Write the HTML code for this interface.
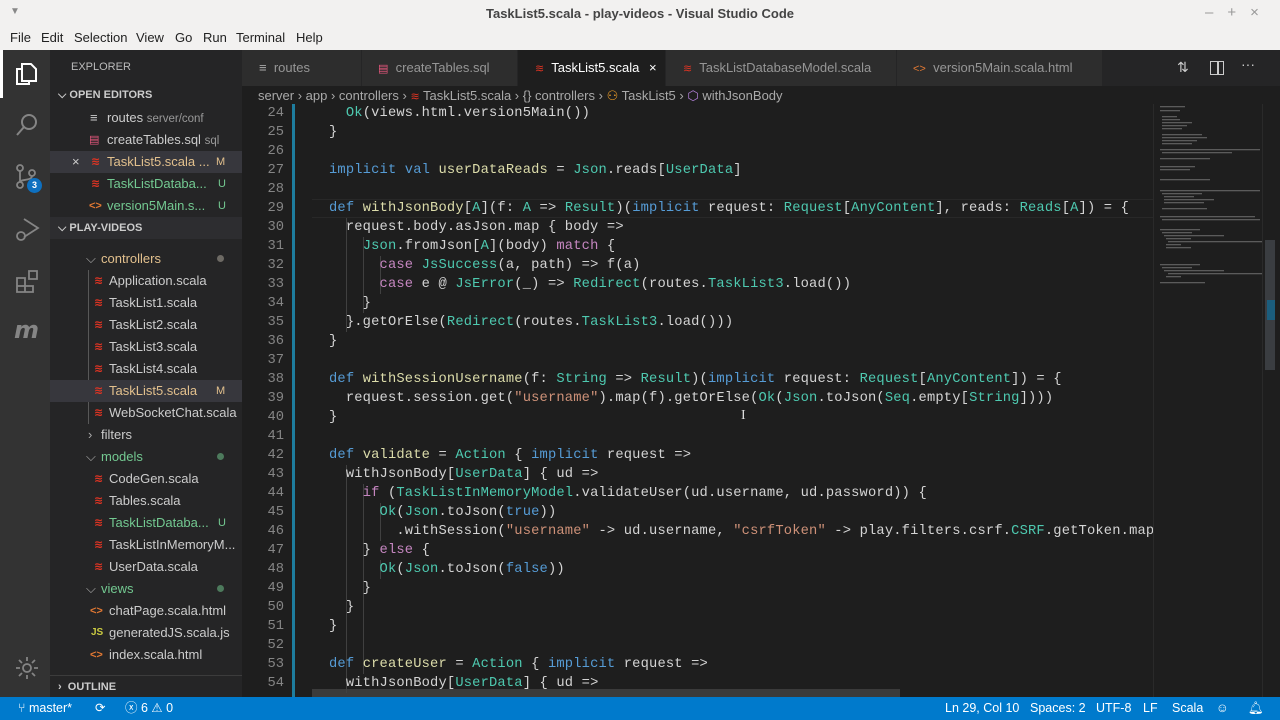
<!DOCTYPE html>
<html><head><meta charset="utf-8"><style>
*{margin:0;padding:0;box-sizing:border-box}
body{width:1280px;height:720px;overflow:hidden;background:#1e1e1e;font-family:"Liberation Sans","DejaVu Sans",sans-serif;position:relative}
.abs{position:absolute}
#title{left:0;top:0;width:1280px;height:28px;background:#f2f1f0;color:#444;font-size:13px;font-weight:bold;text-align:center;line-height:28px}
#menu{left:0;top:28px;width:1280px;height:22px;background:#f2f1f0;font-size:13px;color:#222}
#menu span{position:absolute;top:2px}
#act{left:0;top:50px;width:50px;height:647px;background:#333333}
#side{left:50px;top:50px;width:192px;height:647px;background:#252526;color:#ccc;font-size:13px}
.row{position:absolute;left:0;width:192px;height:22px;line-height:22px;white-space:nowrap}
.hdr{font-weight:bold;font-size:11px;color:#ccc;padding-left:8px}
.ic{position:absolute;font-size:11px;font-weight:bold}
#tabs{left:242px;top:50px;width:1038px;height:36px;background:#252526}
.tab{position:absolute;top:0;height:36px;line-height:36px;background:#2d2d2d;color:#969696;font-size:13px;white-space:nowrap;border-right:1px solid #252526}
#crumb{left:242px;top:86px;width:1038px;height:20px;background:#1e1e1e;color:#a9a9a9;font-size:13px;line-height:20px;white-space:nowrap}
.ln{position:absolute;width:42px;left:242px;text-align:right;color:#858585;font-family:"Liberation Mono",monospace;font-size:13.75px;line-height:19px}
#code{left:312px;top:104px;width:841px;height:593px;overflow:hidden}
.cl{position:absolute;left:17px;white-space:pre;font-family:"Liberation Mono",monospace;font-size:13.75px;letter-spacing:0.17px;line-height:19px;color:#d4d4d4}
.k{color:#569cd6}.f{color:#dcdcaa}.t{color:#4ec9b0}.s{color:#ce9178}.c{color:#c586c0}
#status{left:0;top:697px;width:1280px;height:23px;background:#007acc;color:#fff;font-size:12.5px;line-height:23px}
#status span{position:absolute;top:0}
</style></head><body>
<div id="title" class="abs">TaskList5.scala - play-videos - Visual Studio Code</div>
<div class="abs" style="left:10px;top:6px;color:#888;font-size:10px">▼</div>
<div class="abs" style="left:1205px;top:4px;color:#999;font-size:15px;letter-spacing:14px">–+×</div>
<div id="menu" class="abs"><span style="left:10px">File</span><span style="left:41px">Edit</span><span style="left:74px">Selection</span><span style="left:136px">View</span><span style="left:175px">Go</span><span style="left:203px">Run</span><span style="left:236px">Terminal</span><span style="left:296px">Help</span></div>

<div id="act" class="abs">
<div class="abs" style="left:0;top:0;width:3px;height:48px;background:#fff"></div>
<svg class="abs" style="left:12px;top:10px" width="28" height="28" viewBox="0 0 28 28" fill="none" stroke="#fff" stroke-width="2"><path d="M10 4h9l5 5v12H10z"/><path d="M10 9H5v15h12v-3"/></svg>
<svg class="abs" style="left:14px;top:62px" width="26" height="26" viewBox="0 0 26 26" fill="none" stroke="#858585" stroke-width="2"><circle cx="15" cy="10" r="7"/><path d="M10 15L3 23"/></svg>
<svg class="abs" style="left:14px;top:113px" width="26" height="28" viewBox="0 0 26 28" fill="none" stroke="#858585" stroke-width="1.8"><circle cx="6" cy="5" r="3"/><circle cx="6" cy="22" r="3"/><circle cx="18" cy="10" r="3"/><path d="M6 8v11M18 13c0 5-12 3-12 6"/></svg>
<div class="abs" style="left:27px;top:128px;width:15px;height:15px;border-radius:50%;background:#0e70c0;color:#fff;font-size:9px;font-weight:bold;text-align:center;line-height:15px">3</div>
<svg class="abs" style="left:14px;top:165px" width="26" height="28" viewBox="0 0 26 28" fill="none" stroke="#858585" stroke-width="1.8"><path d="M10 4l14 9-14 9"/><circle cx="7" cy="21" r="4"/></svg>
<svg class="abs" style="left:14px;top:218px" width="26" height="26" viewBox="0 0 26 26" fill="none" stroke="#858585" stroke-width="1.8"><path d="M3 10h8v8H3zM11 18h8v6h-8zM3 18h8v6H3zM15 3h8v8h-8z"/></svg>
<div class="abs" style="left:14px;top:266px;color:#858585;font-size:24px;font-weight:bold;font-style:italic;font-family:'DejaVu Sans'">m</div>
<svg class="abs" style="left:14px;top:605px" width="26" height="26" viewBox="0 0 26 26" fill="none" stroke="#858585" stroke-width="1.8"><circle cx="13" cy="13" r="4"/><path d="M13 2v4M13 20v4M2 13h4M20 13h4M5 5l3 3M18 18l3 3M5 21l3-3M18 8l3-3"/></svg>
</div>

<div id="side" class="abs">
<div class="row" style="top:6px;left:21px;font-size:11px;color:#bbb">EXPLORER</div>
<div class="row hdr" style="top:34px">⌵ OPEN EDITORS</div>
<div class="row" style="top:57px"><span class="abs" style="left:40px;color:#ccc">≡</span><span class="abs" style="left:57px">routes <span style="color:#999;font-size:11.5px">server/conf</span></span></div>
<div class="row" style="top:79px"><span class="ic" style="left:39px;color:#e8577d">▤</span><span class="abs" style="left:57px">createTables.sql <span style="color:#999;font-size:11.5px">sql</span></span></div>
<div class="row" style="top:101px;background:#37373d"><span class="abs" style="left:22px;color:#ccc">×</span><span class="ic" style="left:41px;color:#de3423">≋</span><span class="abs" style="left:57px;color:#e2c08d">TaskList5.scala ...</span><span class="abs" style="left:166px;color:#e2c08d;font-size:11px">M</span></div>
<div class="row" style="top:123px"><span class="ic" style="left:41px;color:#de3423">≋</span><span class="abs" style="left:57px;color:#73c991">TaskListDataba...</span><span class="abs" style="left:168px;color:#73c991;font-size:11px">U</span></div>
<div class="row" style="top:145px"><span class="ic" style="left:39px;color:#e37933">&lt;&gt;</span><span class="abs" style="left:57px;color:#73c991">version5Main.s...</span><span class="abs" style="left:168px;color:#73c991;font-size:11px">U</span></div>
<div class="row hdr" style="top:167px;background:#2d2d30">⌵ PLAY-VIDEOS</div>
<div class="row" style="top:198px"><span class="abs" style="left:36px;color:#aaa">⌵</span><span class="abs" style="left:51px;color:#e2c08d">controllers</span><span class="abs" style="left:167px;top:7px;width:7px;height:7px;border-radius:50%;background:#6d6a64"></span></div>
<div class="abs" style="left:38px;top:220px;width:1px;height:154px;background:#585858"></div>
<div class="row" style="top:220px"><span class="ic" style="left:44px;color:#de3423">≋</span><span class="abs" style="left:59px">Application.scala</span></div>
<div class="row" style="top:242px"><span class="ic" style="left:44px;color:#de3423">≋</span><span class="abs" style="left:59px">TaskList1.scala</span></div>
<div class="row" style="top:264px"><span class="ic" style="left:44px;color:#de3423">≋</span><span class="abs" style="left:59px">TaskList2.scala</span></div>
<div class="row" style="top:286px"><span class="ic" style="left:44px;color:#de3423">≋</span><span class="abs" style="left:59px">TaskList3.scala</span></div>
<div class="row" style="top:308px"><span class="ic" style="left:44px;color:#de3423">≋</span><span class="abs" style="left:59px">TaskList4.scala</span></div>
<div class="row" style="top:330px;background:#37373d"><span class="ic" style="left:44px;color:#de3423">≋</span><span class="abs" style="left:59px;color:#e2c08d">TaskList5.scala</span><span class="abs" style="left:166px;color:#e2c08d;font-size:11px">M</span></div>
<div class="row" style="top:352px"><span class="ic" style="left:44px;color:#de3423">≋</span><span class="abs" style="left:59px">WebSocketChat.scala</span></div>
<div class="row" style="top:374px"><span class="abs" style="left:38px;color:#aaa">›</span><span class="abs" style="left:51px">filters</span></div>
<div class="row" style="top:396px"><span class="abs" style="left:36px;color:#aaa">⌵</span><span class="abs" style="left:51px;color:#73c991">models</span><span class="abs" style="left:167px;top:7px;width:7px;height:7px;border-radius:50%;background:#4d7a5c"></span></div>
<div class="row" style="top:418px"><span class="ic" style="left:44px;color:#de3423">≋</span><span class="abs" style="left:59px">CodeGen.scala</span></div>
<div class="row" style="top:440px"><span class="ic" style="left:44px;color:#de3423">≋</span><span class="abs" style="left:59px">Tables.scala</span></div>
<div class="row" style="top:462px"><span class="ic" style="left:44px;color:#de3423">≋</span><span class="abs" style="left:59px;color:#73c991">TaskListDataba...</span><span class="abs" style="left:168px;color:#73c991;font-size:11px">U</span></div>
<div class="row" style="top:484px"><span class="ic" style="left:44px;color:#de3423">≋</span><span class="abs" style="left:59px">TaskListInMemoryM...</span></div>
<div class="row" style="top:506px"><span class="ic" style="left:44px;color:#de3423">≋</span><span class="abs" style="left:59px">UserData.scala</span></div>
<div class="row" style="top:528px"><span class="abs" style="left:36px;color:#aaa">⌵</span><span class="abs" style="left:51px;color:#73c991">views</span><span class="abs" style="left:167px;top:7px;width:7px;height:7px;border-radius:50%;background:#4d7a5c"></span></div>
<div class="row" style="top:550px"><span class="ic" style="left:40px;color:#e37933">&lt;&gt;</span><span class="abs" style="left:59px">chatPage.scala.html</span></div>
<div class="row" style="top:572px"><span class="ic" style="left:41px;color:#cbcb41;font-size:10px">JS</span><span class="abs" style="left:59px">generatedJS.scala.js</span></div>
<div class="row" style="top:594px"><span class="ic" style="left:40px;color:#e37933">&lt;&gt;</span><span class="abs" style="left:59px">index.scala.html</span></div>
<div class="row hdr" style="top:625px;border-top:1px solid #3c3c3c;background:#252526">›&nbsp; OUTLINE</div>
</div>

<div id="tabs" class="abs">
<div class="tab" style="left:0;width:120px"><span style="margin-left:17px;color:#aaa">≡</span>&nbsp; routes</div>
<div class="tab" style="left:120px;width:156px"><span style="margin-left:16px;color:#e8577d;font-size:11px">▤</span>&nbsp; createTables.sql</div>
<div class="tab" style="left:276px;width:148px;background:#1e1e1e;color:#fff"><span style="margin-left:17px;color:#de3423;font-size:11px">≋</span>&nbsp; TaskList5.scala <span style="margin-left:6px">×</span></div>
<div class="tab" style="left:424px;width:231px"><span style="margin-left:17px;color:#de3423;font-size:11px">≋</span>&nbsp; TaskListDatabaseModel.scala</div>
<div class="tab" style="left:655px;width:206px"><span style="margin-left:16px;color:#e37933;font-size:11px">&lt;&gt;</span>&nbsp; version5Main.scala.html</div>
<div class="abs" style="left:935px;top:9px;color:#ccc;font-size:14px">⇅</div>
<div class="abs" style="left:968px;top:11px;width:14px;height:14px;border:1.5px solid #ccc"></div><div class="abs" style="left:975px;top:11px;width:1.5px;height:14px;background:#ccc"></div>
<div class="abs" style="left:999px;top:6px;color:#ccc;font-size:14px">···</div>
</div>
<div id="crumb" class="abs"><span style="margin-left:16px">server › app › controllers › <span style="color:#de3423;font-size:11px">≋</span> TaskList5.scala › {} controllers › <span style="color:#ee9d28">⚇</span> TaskList5 › <span style="color:#b180d7">⬡</span> withJsonBody</span></div>

<div class="abs" style="left:292px;top:104px;width:3px;height:593px;background:#1e7d9e"></div>
<div class="ln" style="top:104px">24</div><div class="ln" style="top:123px">25</div><div class="ln" style="top:142px">26</div><div class="ln" style="top:161px">27</div><div class="ln" style="top:180px">28</div><div class="ln" style="top:199px">29</div><div class="ln" style="top:218px">30</div><div class="ln" style="top:237px">31</div><div class="ln" style="top:256px">32</div><div class="ln" style="top:275px">33</div><div class="ln" style="top:294px">34</div><div class="ln" style="top:313px">35</div><div class="ln" style="top:332px">36</div><div class="ln" style="top:351px">37</div><div class="ln" style="top:370px">38</div><div class="ln" style="top:389px">39</div><div class="ln" style="top:408px">40</div><div class="ln" style="top:427px">41</div><div class="ln" style="top:446px">42</div><div class="ln" style="top:465px">43</div><div class="ln" style="top:484px">44</div><div class="ln" style="top:503px">45</div><div class="ln" style="top:522px">46</div><div class="ln" style="top:541px">47</div><div class="ln" style="top:560px">48</div><div class="ln" style="top:579px">49</div><div class="ln" style="top:598px">50</div><div class="ln" style="top:617px">51</div><div class="ln" style="top:636px">52</div><div class="ln" style="top:655px">53</div><div class="ln" style="top:674px">54</div>

<div id="code" class="abs">
<div class="abs" style="left:0;top:95px;width:841px;height:19px;border-top:1px solid #282828;border-bottom:1px solid #282828"></div>
<div class="abs" style="left:34px;top:114px;width:1px;height:114px;background:#404040"></div>
<div class="abs" style="left:51px;top:133px;width:1px;height:76px;background:#404040"></div>
<div class="abs" style="left:68px;top:152px;width:1px;height:38px;background:#404040"></div>
<div class="abs" style="left:34px;top:361px;width:1px;height:228px;background:#404040"></div>
<div class="abs" style="left:51px;top:380px;width:1px;height:190px;background:#404040"></div>
<div class="abs" style="left:68px;top:399px;width:1px;height:38px;background:#404040"></div>
<div class="abs" style="left:68px;top:456px;width:1px;height:19px;background:#404040"></div>
<div class="cl" style="top:0">  <span class="t">Ok</span>(views.html.version5Main())</div>
<div class="cl" style="top:19px">}</div>
<div class="cl" style="top:57px"><span class="k">implicit val</span> <span class="f">userDataReads</span> = <span class="t">Json</span>.reads[<span class="t">UserData</span>]</div>
<div class="cl" style="top:95px"><span class="k">def</span> <span class="f">withJsonBody</span>[<span class="t">A</span>](f: <span class="t">A</span> =&gt; <span class="t">Result</span>)(<span class="k">implicit</span> request: <span class="t">Request</span>[<span class="t">AnyContent</span>], reads: <span class="t">Reads</span>[<span class="t">A</span>]) = {</div>
<div class="cl" style="top:114px">  request.body.asJson.map { body =&gt;</div>
<div class="cl" style="top:133px">    <span class="t">Json</span>.fromJson[<span class="t">A</span>](body) <span class="c">match</span> {</div>
<div class="cl" style="top:152px">      <span class="c">case</span> <span class="t">JsSuccess</span>(a, path) =&gt; f(a)</div>
<div class="cl" style="top:171px">      <span class="c">case</span> e @ <span class="t">JsError</span>(_) =&gt; <span class="t">Redirect</span>(routes.<span class="t">TaskList3</span>.load())</div>
<div class="cl" style="top:190px">    }</div>
<div class="cl" style="top:209px">  }.getOrElse(<span class="t">Redirect</span>(routes.<span class="t">TaskList3</span>.load()))</div>
<div class="cl" style="top:228px">}</div>
<div class="cl" style="top:266px"><span class="k">def</span> <span class="f">withSessionUsername</span>(f: <span class="t">String</span> =&gt; <span class="t">Result</span>)(<span class="k">implicit</span> request: <span class="t">Request</span>[<span class="t">AnyContent</span>]) = {</div>
<div class="cl" style="top:285px">  request.session.get(<span class="s">"username"</span>).map(f).getOrElse(<span class="t">Ok</span>(<span class="t">Json</span>.toJson(<span class="t">Seq</span>.empty[<span class="t">String</span>])))</div>
<div class="cl" style="top:304px">}</div>
<div class="cl" style="top:342px"><span class="k">def</span> <span class="f">validate</span> = <span class="t">Action</span> { <span class="k">implicit</span> request =&gt;</div>
<div class="cl" style="top:361px">  withJsonBody[<span class="t">UserData</span>] { ud =&gt;</div>
<div class="cl" style="top:380px">    <span class="c">if</span> (<span class="t">TaskListInMemoryModel</span>.validateUser(ud.username, ud.password)) {</div>
<div class="cl" style="top:399px">      <span class="t">Ok</span>(<span class="t">Json</span>.toJson(<span class="k">true</span>))</div>
<div class="cl" style="top:418px">        .withSession(<span class="s">"username"</span> -&gt; ud.username, <span class="s">"csrfToken"</span> -&gt; play.filters.csrf.<span class="t">CSRF</span>.getToken.map(_.value).getOrElse(<span class="s">""</span>))</div>
<div class="cl" style="top:437px">    } <span class="c">else</span> {</div>
<div class="cl" style="top:456px">      <span class="t">Ok</span>(<span class="t">Json</span>.toJson(<span class="k">false</span>))</div>
<div class="cl" style="top:475px">    }</div>
<div class="cl" style="top:494px">  }</div>
<div class="cl" style="top:513px">}</div>
<div class="cl" style="top:551px"><span class="k">def</span> <span class="f">createUser</span> = <span class="t">Action</span> { <span class="k">implicit</span> request =&gt;</div>
<div class="cl" style="top:570px">  withJsonBody[<span class="t">UserData</span>] { ud =&gt;</div>
<div class="abs" style="left:0;top:585px;width:588px;height:8px;background:#424242;opacity:.8"></div>
</div>
<div class="abs" style="left:741px;top:408px;color:#ddd;font-size:14px;font-family:'Liberation Serif'">I</div>

<div class="abs" style="left:1153px;top:104px;width:1px;height:593px;background:#2a2a2a"></div>
<svg class="abs" style="left:1158px;top:104px" width="110" height="190">
<g fill="#6b6b6b" opacity=".8">
<rect x="2" y="2" width="25" height="1.3"/><rect x="2" y="6" width="20" height="1.3"/><rect x="4" y="12" width="15" height="1.3"/><rect x="4" y="15" width="18" height="1.3"/><rect x="4" y="18" width="30" height="1.3"/><rect x="4" y="21" width="25" height="1.3"/><rect x="4" y="24" width="20" height="1.3"/>
<rect x="4" y="30" width="40" height="1.3"/><rect x="4" y="33" width="45" height="1.3"/><rect x="4" y="36" width="35" height="1.3"/><rect x="4" y="39" width="30" height="1.3"/>
<rect x="2" y="45" width="100" height="1.3"/><rect x="4" y="48" width="70" height="1.3"/><rect x="2" y="54" width="50" height="1.3"/><rect x="2" y="62" width="35" height="1.3"/><rect x="2" y="65" width="30" height="1.3"/>
<rect x="2" y="75" width="50" height="1.3"/><rect x="2" y="86" width="100" height="1.3"/><rect x="4" y="89" width="40" height="1.3"/><rect x="6" y="92" width="30" height="1.3"/><rect x="6" y="95" width="50" height="1.3"/><rect x="6" y="98" width="40" height="1.3"/><rect x="4" y="104" width="45" height="1.3"/>
<rect x="2" y="112" width="95" height="1.3"/><rect x="4" y="115" width="98" height="1.3"/><rect x="2" y="125" width="40" height="1.3"/><rect x="4" y="128" width="30" height="1.3"/><rect x="6" y="131" width="60" height="1.3"/><rect x="8" y="134" width="25" height="1.3"/><rect x="10" y="137" width="100" height="1.3"/><rect x="8" y="140" width="15" height="1.3"/><rect x="8" y="143" width="25" height="1.3"/>
<rect x="2" y="160" width="40" height="1.3"/><rect x="4" y="163" width="30" height="1.3"/><rect x="6" y="166" width="60" height="1.3"/><rect x="10" y="169" width="100" height="1.3"/><rect x="8" y="172" width="15" height="1.3"/><rect x="2" y="178" width="45" height="1.3"/>
</g></svg>
<div class="abs" style="left:1262px;top:104px;width:18px;height:593px;background:#1e1e1e;border-left:1px solid #2a2a2a"></div>
<div class="abs" style="left:1265px;top:240px;width:10px;height:130px;background:#3a3d41"></div>
<div class="abs" style="left:1267px;top:300px;width:8px;height:20px;background:#1b5d7d"></div>

<div id="status" class="abs">
<span style="left:18px">⑂ master*</span><span style="left:95px">⟳</span><span style="left:125px">ⓧ 6 ⚠ 0</span>
<span style="left:945px">Ln 29, Col 10</span><span style="left:1030px">Spaces: 2</span><span style="left:1096px">UTF-8</span><span style="left:1143px">LF</span><span style="left:1172px">Scala</span><span style="left:1216px">☺</span><span style="left:1248px">🔔︎</span>
</div>
</body></html>
